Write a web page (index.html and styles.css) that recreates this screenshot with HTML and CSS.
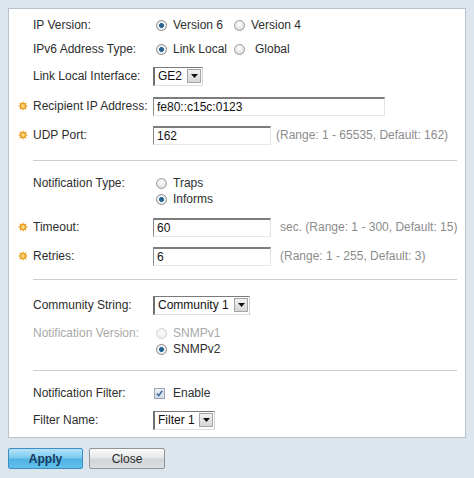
FILE: index.html
```html
<!DOCTYPE html>
<html>
<head>
<meta charset="utf-8">
<link rel="stylesheet" href="styles.css">
</head>
<body>
<div class="panel">
  <div class="row r1">
    <div class="label"><span class="slot"></span>IP Version:</div>
    <div class="ctrl">
      <input type="radio" class="radio" name="ipv" checked><span class="opt w58">Version 6</span>
      <input type="radio" class="radio" name="ipv"><span class="opt">Version 4</span>
    </div>
  </div>
  <div class="row r2">
    <div class="label"><span class="slot"></span>IPv6 Address Type:</div>
    <div class="ctrl">
      <input type="radio" class="radio" name="at" checked><span class="opt w58">Link Local</span>
      <input type="radio" class="radio" name="at"><span class="opt shift">Global</span>
    </div>
  </div>
  <div class="row r3">
    <div class="label"><span class="slot"></span>Link Local Interface:</div>
    <div class="ctrl">
      <div class="select w50"><span class="val">GE2</span><span class="arrow"><svg width="7" height="4" viewBox="0 0 7 4"><polygon points="0,0 7,0 3.5,4" fill="#111"/></svg></span></div>
    </div>
  </div>
  <div class="row r4">
    <div class="label"><span class="slot"><svg class="star" width="10" height="10" viewBox="0 0 10 10"><polygon points="5,0 5.9,2.2 8.5,1.5 7.8,4.1 10,5 7.8,5.9 8.5,8.5 5.9,7.8 5,10 4.1,7.8 1.5,8.5 2.2,5.9 0,5 2.2,4.1 1.5,1.5 4.1,2.2" fill="#e99a1a"/><circle cx="5" cy="5" r="2" fill="#fbd57a"/></svg></span>Recipient IP Address:</div>
    <div class="ctrl">
      <input type="text" class="text w232" value="fe80::c15c:0123">
    </div>
  </div>
  <div class="row r5">
    <div class="label"><span class="slot"><svg class="star" width="10" height="10" viewBox="0 0 10 10"><polygon points="5,0 5.9,2.2 8.5,1.5 7.8,4.1 10,5 7.8,5.9 8.5,8.5 5.9,7.8 5,10 4.1,7.8 1.5,8.5 2.2,5.9 0,5 2.2,4.1 1.5,1.5 4.1,2.2" fill="#e99a1a"/><circle cx="5" cy="5" r="2" fill="#fbd57a"/></svg></span>UDP Port:</div>
    <div class="ctrl">
      <input type="text" class="text w118" value="162"><span class="hint h5">(Range: 1 - 65535, Default: 162)</span>
    </div>
  </div>
  <div class="sep s1"></div>
  <div class="row stack">
    <div class="label top"><span class="slot"></span>Notification Type:</div>
    <div class="ctrl col">
      <div class="line"><input type="radio" class="radio" name="nt"><span class="opt">Traps</span></div>
      <div class="line"><input type="radio" class="radio" name="nt" checked><span class="opt">Informs</span></div>
    </div>
  </div>
  <div class="row r6">
    <div class="label"><span class="slot"><svg class="star" width="10" height="10" viewBox="0 0 10 10"><polygon points="5,0 5.9,2.2 8.5,1.5 7.8,4.1 10,5 7.8,5.9 8.5,8.5 5.9,7.8 5,10 4.1,7.8 1.5,8.5 2.2,5.9 0,5 2.2,4.1 1.5,1.5 4.1,2.2" fill="#e99a1a"/><circle cx="5" cy="5" r="2" fill="#fbd57a"/></svg></span>Timeout:</div>
    <div class="ctrl">
      <input type="text" class="text w118" value="60"><span class="hint h9">sec. (Range: 1 - 300, Default: 15)</span>
    </div>
  </div>
  <div class="row r7">
    <div class="label"><span class="slot"><svg class="star" width="10" height="10" viewBox="0 0 10 10"><polygon points="5,0 5.9,2.2 8.5,1.5 7.8,4.1 10,5 7.8,5.9 8.5,8.5 5.9,7.8 5,10 4.1,7.8 1.5,8.5 2.2,5.9 0,5 2.2,4.1 1.5,1.5 4.1,2.2" fill="#e99a1a"/><circle cx="5" cy="5" r="2" fill="#fbd57a"/></svg></span>Retries:</div>
    <div class="ctrl">
      <input type="text" class="text w118" value="6"><span class="hint h9">(Range: 1 - 255, Default: 3)</span>
    </div>
  </div>
  <div class="sep s2"></div>
  <div class="row r8">
    <div class="label"><span class="slot"></span>Community String:</div>
    <div class="ctrl">
      <div class="select w97"><span class="val">Community 1</span><span class="arrow"><svg width="7" height="4" viewBox="0 0 7 4"><polygon points="0,0 7,0 3.5,4" fill="#111"/></svg></span></div>
    </div>
  </div>
  <div class="row stack s-ver">
    <div class="label top disabled"><span class="slot"></span>Notification Version:</div>
    <div class="ctrl col">
      <div class="line"><input type="radio" class="radio" name="nv" disabled><span class="opt disabled">SNMPv1</span></div>
      <div class="line"><input type="radio" class="radio" name="nv" checked><span class="opt">SNMPv2</span></div>
    </div>
  </div>
  <div class="sep s3"></div>
  <div class="row r9">
    <div class="label"><span class="slot"></span>Notification Filter:</div>
    <div class="ctrl">
      <span class="check"><svg width="9" height="9" viewBox="0 0 9 9"><path d="M1.8 4.6 L3.7 6.8 L7.3 1.8" fill="none" stroke="#3c6fa8" stroke-width="1.6"/></svg></span><span class="opt">Enable</span>
    </div>
  </div>
  <div class="row r10">
    <div class="label"><span class="slot"></span>Filter Name:</div>
    <div class="ctrl">
      <div class="select w62"><span class="val">Filter 1</span><span class="arrow"><svg width="7" height="4" viewBox="0 0 7 4"><polygon points="0,0 7,0 3.5,4" fill="#111"/></svg></span></div>
    </div>
  </div>
</div>
<div class="buttons">
  <button class="btn apply">Apply</button>
  <button class="btn close">Close</button>
</div>
</body>
</html>
```
FILE: styles.css
```css
html, body {
  margin: 0;
  padding: 0;
}
body {
  background: #dde5ed;
  font-family: "Liberation Sans", Arial, sans-serif;
  font-size: 12px;
  color: #2e2e2e;
  width: 474px;
  height: 478px;
  overflow: hidden;
}
.panel {
  box-sizing: border-box;
  margin: 8px 0 0 8px;
  width: 458px;
  height: 430px;
  background: #fff;
  border: 1px solid #b9c3cd;
  padding: 5px 0 0 8px;
  display: flex;
  flex-direction: column;
}
.row {
  display: flex;
  align-items: center;
  flex: none;
}
.r1 { height: 22px; }
.r2 { height: 26px; }
.r3 { height: 28px; }
.r4 { height: 32px; }
.r5 { height: 26px; }
.r6 { height: 30px; margin-top: 5px; }
.r7 { height: 28px; }
.r8 { height: 28px; }
.r9 { height: 22px; }
.r10 { height: 32px; }
.stack { align-items: flex-start; }
.s-ver { margin-top: 6px; }
.label {
  width: 136px;
  flex: none;
  display: flex;
  align-items: center;
  white-space: nowrap;
}
.label.top { height: 16px; }
.slot {
  width: 16px;
  flex: none;
  display: flex;
  align-items: center;
}
.star { display: block; margin-left: 1px; }
.ctrl {
  display: flex;
  align-items: center;
  white-space: nowrap;
}
.ctrl.col {
  flex-direction: column;
  align-items: flex-start;
}
.line {
  height: 16px;
  display: flex;
  align-items: center;
}
.disabled { color: #a9a9a9; }
.radio {
  appearance: none;
  -webkit-appearance: none;
  box-sizing: border-box;
  width: 11px;
  height: 11px;
  margin: 0 6px 0 3px;
  border: 1px solid #9a9a9a;
  border-radius: 50%;
  background: radial-gradient(circle at 50% 35%, #ffffff 0%, #e6e6e6 60%, #d0d0d0 100%);
  flex: none;
}
.radio:checked {
  border-color: #8a8a8a;
  background: radial-gradient(circle, #1b5a86 0, #2c6e9c 2.2px, #f4f4f4 2.6px, #dcdcdc 100%);
}
.radio:disabled {
  border-color: #cfcfcf;
  background: radial-gradient(circle at 50% 35%, #fafafa 0%, #eeeeee 100%);
}
.opt { display: inline-block; }
.w58 { width: 58px; }
.opt.shift { margin-left: 4px; }
.check {
  box-sizing: border-box;
  width: 11px;
  height: 11px;
  margin: 0 8px 0 1px;
  border: 1px solid #9aa6b4;
  background: linear-gradient(#eef2f7, #d5dde7);
  display: flex;
  align-items: center;
  justify-content: center;
  flex: none;
}
.check svg { display: block; }
.text {
  box-sizing: border-box;
  height: 19px;
  padding: 0 0 0 3px;
  margin: 0;
  border-style: solid;
  border-width: 2px 1px 1px 1px;
  border-color: #7c7c7c #e2e2e2 #e8e8e8 #8a8a8a;
  font-family: "Liberation Sans", Arial, sans-serif;
  font-size: 12px;
  color: #111;
  background: #fff;
  outline: none;
}
.w232 { width: 232px; }
.w118 { width: 118px; }
.hint { color: #8c8c8c; }
.h5 { margin-left: 5px; }
.h9 { margin-left: 9px; }
.select {
  box-sizing: border-box;
  height: 19px;
  display: flex;
  align-items: center;
  justify-content: space-between;
  border-style: solid;
  border-width: 1px 1px 1px 2px;
  border-color: #7a7a7a #d4d4d4 #dedede #6f6f6f;
  padding: 0 1px 0 3px;
  color: #111;
  background: #fff;
}
.w50 { width: 50px; }
.w97 { width: 97px; }
.w62 { width: 62px; }
.arrow {
  box-sizing: border-box;
  width: 14px;
  height: 14px;
  border: 1px solid #a4a4a4;
  background: linear-gradient(#f2f2f2, #d6d6d6);
  display: flex;
  align-items: center;
  justify-content: center;
}
.arrow svg { display: block; }
.sep {
  flex: none;
  height: 1px;
  background: #cdcdcd;
  margin-left: 16px;
  width: 424px;
}
.s1 { margin-top: 12px; margin-bottom: 14px; }
.s2 { margin-top: 9px; margin-bottom: 11px; }
.s3 { margin-top: 13px; margin-bottom: 11px; }
.buttons {
  display: flex;
  gap: 6px;
  margin: 10px 0 0 8px;
}
.btn {
  box-sizing: border-box;
  height: 21px;
  width: 76px;
  padding: 0;
  font-family: "Liberation Sans", Arial, sans-serif;
  font-size: 12px;
  border-radius: 2px;
  cursor: pointer;
}
.apply {
  width: 75px;
  border: 1px solid #3b8fc4;
  background: linear-gradient(#b6e3f8 0%, #7ccbef 45%, #4fb3e3 55%, #62c0ea 100%);
  color: #17385c;
  font-weight: bold;
}
.close {
  border: 1px solid #8f9499;
  background: linear-gradient(#fbfbfb 0%, #e6e8ea 45%, #d2d5d9 55%, #dcdfe2 100%);
  color: #2a2a2a;
}
```
